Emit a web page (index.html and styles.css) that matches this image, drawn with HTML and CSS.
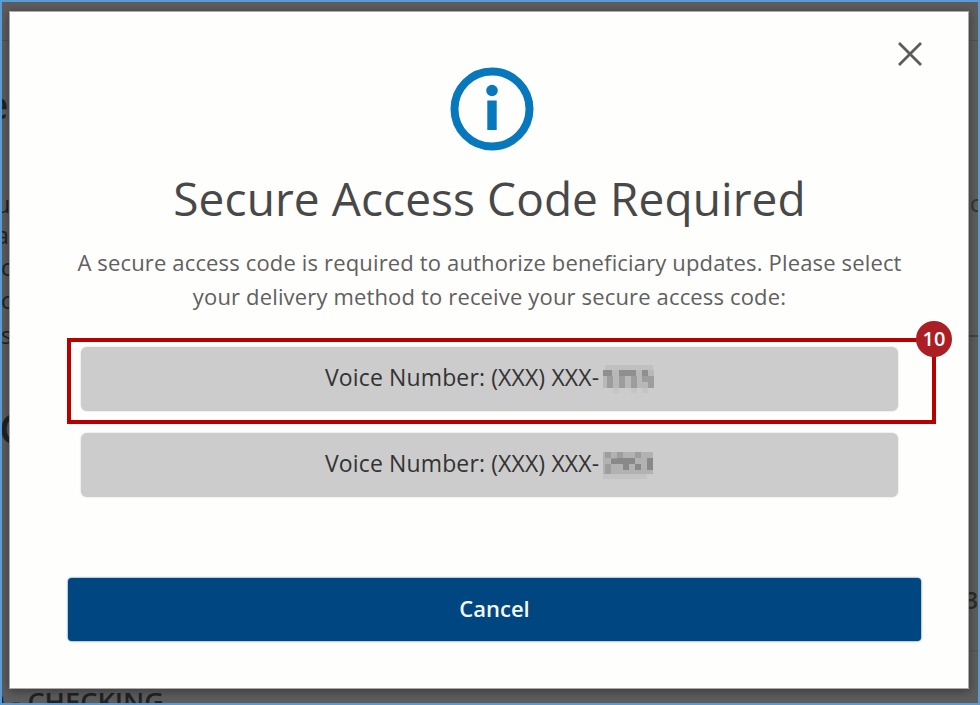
FILE: index.html
```
<!DOCTYPE html>
<html lang="en">
<head>
<meta charset="utf-8">
<title>Secure Access Code Required</title>
<link rel="stylesheet" href="styles.css">
</head>
<body>
<div class="screen">
  <svg class="backdrop" width="976" height="701" viewBox="2 2 976 701" aria-hidden="true">
    <path d="M2 40.500H978" stroke="#525252"/>
    <path d="M960 336H978" stroke="#3c3c3c" stroke-width="1.500"/>
    <path d="M960 651H978" stroke="#525252"/>
    <g fill="#222" font-size="23">
      <text x="-13" y="119" font-size="37" font-weight="600">e</text>
      <text x="-4" y="213">u</text>
      <text x="-4" y="244">a</text>
      <text x="1" y="276">c</text>
      <text x="1" y="309">c</text>
      <text x="1" y="344">s</text>
      <text x="-1" y="444" font-size="42" font-weight="600">C</text>
      <text x="958" y="212" fill="#333" textLength="23">ac</text>
      <text x="965" y="609" fill="#2c2c2c" font-weight="600">3</text>
      <text x="-11" y="711" font-weight="600" font-size="25" textLength="175" lengthAdjust="spacingAndGlyphs">0 - CHECKING</text>
    </g>
  </svg>
  <main class="modal">
    <button class="close" aria-label="Close">
      <svg width="26" height="26" viewBox="0 0 26 26"><path d="M2 2 24 24M24 2 2 24" stroke="#5c5c5c" stroke-width="2.800"/></svg>
    </button>
    <svg class="info" width="84" height="84" viewBox="0 0 84 84">
      <circle cx="42" cy="42" r="37.500" fill="none" stroke="#0878bd" stroke-width="8"/>
      <circle cx="42" cy="23.500" r="5.800" fill="#0878bd"/>
      <path d="M37.300 33.500h9.400v29.500h-9.400z" fill="#0878bd"/>
    </svg>
    <h1>Secure Access Code Required</h1>
    <p>A secure access code is required to authorize beneficiary updates. Please select<br>your delivery method to receive your secure access code:</p>
    <div class="choice marked">
      <button class="option"><span>Voice Number: (XXX) XXX-</span><svg class="mosaic" width="53" height="30" viewBox="0 0 53 30">
        <path d="M2 1h48v5H2z" fill="#c0c0c0"/><path d="M0 6h51v18H0z" fill="#b8b8b8"/>
        <path d="M0 6h9v6H0zM16 6h17v6H16zM39 6h6v6H39z" fill="#8f8f8f"/>
        <path d="M4 12h6v12H4zM16 12h6v12H16zM28 12h6v12H28zM39 12h6v6H39zM45 12h6v12H45z" fill="#9d9d9d"/>
        <path d="M10 24h6v5H10zM28 24h6v5H28zM39 24h6v5H39z" fill="#c5c5c5"/>
      </svg></button>
      <b class="badge">10</b>
    </div>
    <div class="choice">
      <button class="option"><span>Voice Number: (XXX) XXX-</span><svg class="mosaic" width="53" height="30" viewBox="0 0 53 30">
        <path d="M0 2h50v22H0z" fill="#b2b2b2"/>
        <path d="M2 2h6v6H2zM14 2h6v6H14zM32 2h6v6H32zM2 14h6v10H2zM8 8h12v6H8z" fill="#9e9e9e"/>
        <path d="M8 9h6v5H8zM20 8h12v6H20zM14 8h6v6H14zM20 14h6v6H20zM32 14h6v6H32zM44 8h6v12H44z" fill="#898989"/>
        <path d="M0 24h44v5H0z" fill="#c3c3c3"/>
      </svg></button>
    </div>
    <button class="cancel">Cancel</button>
  </main>
</div>
</body>
</html>
```
FILE: styles.css
```
* { box-sizing: border-box; }
body { margin: 0; font-family: "Open Sans", sans-serif; }
button { border: 0; padding: 0; font: inherit; }
.screen {
  position: relative;
  width: 980px;
  height: 705px;
  overflow: hidden;
  padding: 10px 9px 15px 8px;
  border: 2px solid #5b9bd5;
  background: #5d5d5d;
}
.backdrop { position: absolute; top: 0; left: 0; }
.modal {
  position: relative;
  display: flex;
  flex-direction: column;
  width: 958px;
  height: 676px;
  padding: 55px 47px 0 58px;
  background: #fefefd;
  box-shadow: 0 0 0 1px #aaa, 0 2px 9px 2px #0005;
}
.close { position: absolute; top: 29px; right: 45px; width: 26px; height: 26px; background: none; }
.close svg, .info { display: block; }
.info { margin-left: 381.500px; }
h1 {
  margin: 15px 10px 0 0;
  height: 64px;
  line-height: 64px;
  font-size: 46px;
  font-weight: 400;
  letter-spacing: .08px;
  text-align: center;
  white-space: nowrap;
  color: #484848;
}
p {
  margin: 15px 10px 0 0;
  height: 68px;
  line-height: 34px;
  font-size: 22px;
  letter-spacing: .155px;
  text-align: center;
  white-space: nowrap;
  color: #606060;
}
.choice { position: relative; width: 869px; height: 86px; margin-left: -1px; padding: 9px 0 0 14px; }
.marked { margin-top: 25px; padding: 5px 0 0 10px; border: 4px solid #b90000; }
.option {
  display: flex;
  align-items: center;
  width: 817px;
  height: 64px;
  padding-left: 244px;
  border-radius: 6px;
  background: #ccc;
  box-shadow: 0 0 2px #ccc;
  font-size: 23px;
  letter-spacing: .13px;
  text-align: left;
  white-space: nowrap;
  color: #333;
}
.option span { width: 278px; margin-top: -4px; }
.badge {
  position: absolute;
  top: -21px;
  right: -20px;
  width: 36px;
  height: 36px;
  border-radius: 50%;
  background: #ab1e23;
  color: #fff;
  font: 600 20px/36px "Open Sans", sans-serif;
  text-align: center;
}
.cancel {
  width: 853px;
  height: 63px;
  margin-top: 68px;
  padding-bottom: 4px;
  border-radius: 4px;
  background: #004680;
  box-shadow: 0 0 2px #004680;
  color: #f4f8fb;
  font-size: 22px;
  font-weight: 600;
}
```
